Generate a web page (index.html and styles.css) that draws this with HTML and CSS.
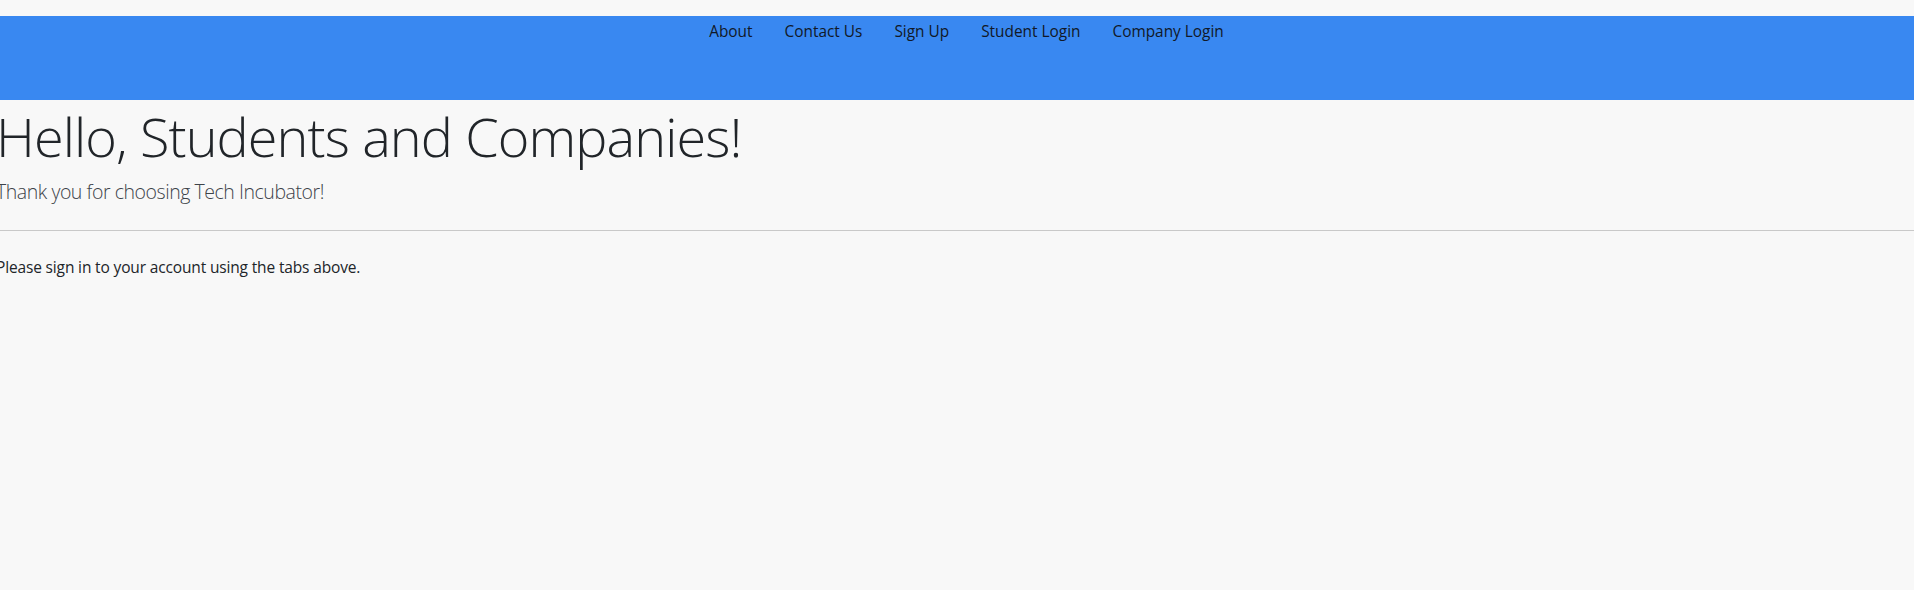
FILE: index.html
```html
<!DOCTYPE html>
<html lang="en">
<head>
<meta charset="utf-8">
<title>Tech Incubator</title>
<link rel="stylesheet" href="styles.css">
</head>
<body>
<header class="topbar">
  <ul class="nav">
    <li class="nav-item"><a class="nav-link" href="#">About</a></li>
    <li class="nav-item"><a class="nav-link" href="#">Contact Us</a></li>
    <li class="nav-item"><a class="nav-link" href="#">Sign Up</a></li>
    <li class="nav-item"><a class="nav-link" href="#">Student Login</a></li>
    <li class="nav-item"><a class="nav-link" href="#">Company Login</a></li>
  </ul>
</header>
<main class="jumbo">
  <h1 class="display">Hello, Students and Companies!</h1>
  <p class="lead">Thank you for choosing Tech Incubator!</p>
  <hr class="rule">
  <p class="note">Please sign in to your account using the tabs above.</p>
</main>
</body>
</html>
```
FILE: styles.css
```css
html, body {
  margin: 0;
  padding: 0;
  background: #f8f8f8;
  color: #212529;
  font-family: "Open Sans", "Noto Sans", sans-serif;
}
.topbar {
  margin-top: 16px;
  height: 84px;
  background: #3988f1;
}
.nav {
  list-style: none;
  margin: 0;
  padding: 4px 0 0 19px;
  display: flex;
  justify-content: center;
}
.nav-link {
  display: block;
  padding: 0 16px;
  font-size: 15.4px;
  line-height: 24px;
  color: #111827;
  text-decoration: none;
}
.jumbo {
  margin-left: -4px;
}
.display {
  margin: 4px 0 0;
  font-size: 54px;
  letter-spacing: -0.9px;
  font-weight: 300;
  line-height: 1.2;
}
.lead {
  margin: 8px 0 0;
  font-size: 19.5px;
  letter-spacing: -0.45px;
  font-weight: 300;
  line-height: 30px;
  color: #3d4349;
}
.rule {
  margin: 23px 0 0;
  border: 0;
  border-top: 1px solid #c9c9c9;
  margin-left: 4px;
}
.note {
  margin: 24px 0 0;
  font-size: 15.5px;
  letter-spacing: -0.15px;
  line-height: 24px;
}
```
